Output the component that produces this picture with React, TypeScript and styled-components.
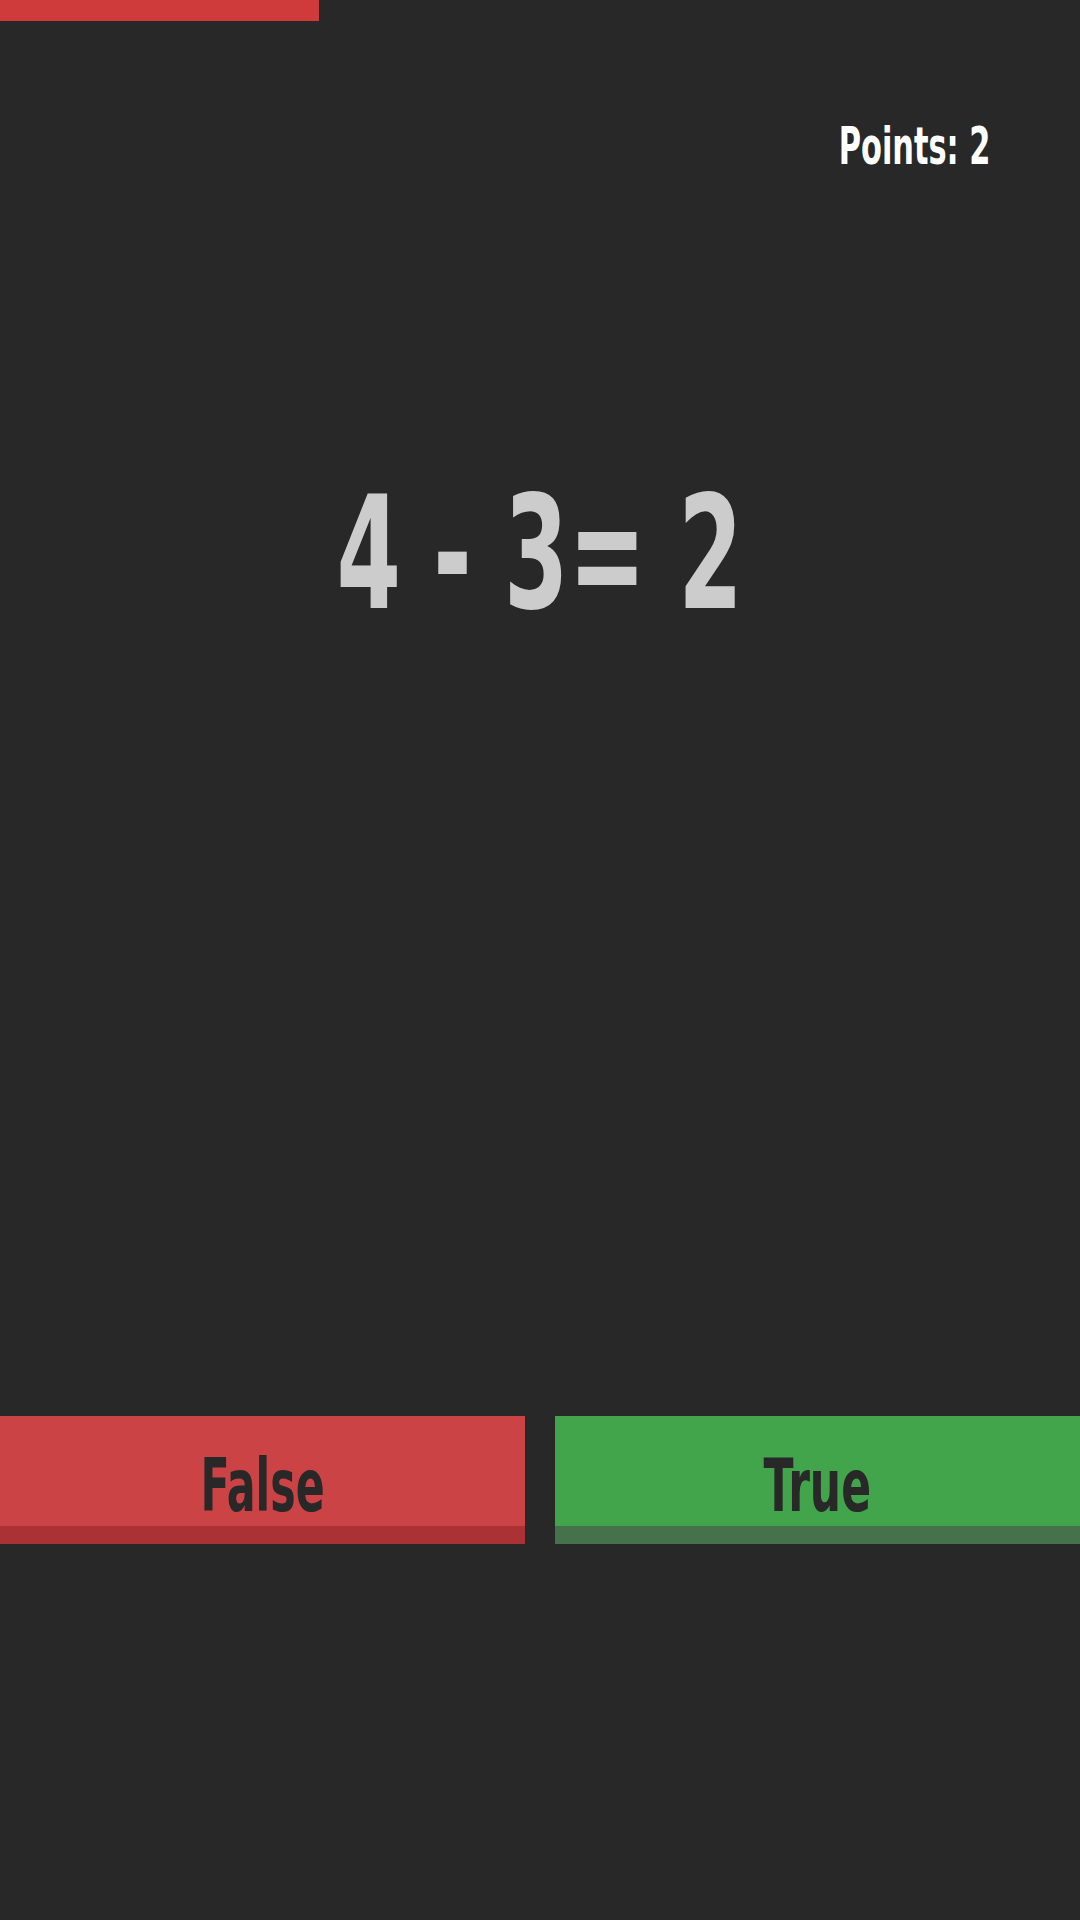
import React from 'react';
import styled, { createGlobalStyle } from 'styled-components';

const GlobalStyle = createGlobalStyle`
  html, body {
    margin: 0;
    padding: 0;
    background: #282828;
  }
  body {
    font-family: "DejaVu Sans Condensed", "DejaVu Sans", sans-serif;
  }
`;

const Screen = styled.div`
  width: 1080px;
  height: 1920px;
  background: #282828;
  display: flex;
  flex-direction: column;
  overflow: hidden;
`;

const TimerTrack = styled.div`
  height: 21px;
  width: 100%;
`;

const TimerFill = styled.div`
  height: 100%;
  background: #cf3a3b;
`;

const PointsRow = styled.div`
  display: flex;
  justify-content: flex-end;
  padding-right: 89px;
  margin-top: 99px;
`;

const Condensed = styled.span<{ $squeeze: number; $origin?: string }>`
  display: inline-block;
  transform: scaleX(${p => p.$squeeze});
  transform-origin: ${p => p.$origin ?? 'center'};
`;

const Points = styled.div`
  color: #ffffff;
  font-size: 52px;
  line-height: 52px;
  font-weight: 700;
  white-space: nowrap;
`;

const Equation = styled.div`
  margin-top: 304px;
  text-align: center;
  color: #cccccc;
  font-size: 156px;
  line-height: 156px;
  font-weight: 700;
  white-space: pre;
`;

const Answers = styled.div`
  margin-top: 784px;
  display: grid;
  grid-template-columns: 1fr 1fr;
  column-gap: 30px;
`;

const AnswerButton = styled.button<{ $face: string; $edge: string }>`
  all: unset;
  box-sizing: border-box;
  height: 128px;
  padding-top: 29px;
  background: ${p => p.$face};
  border-bottom: 18px solid ${p => p.$edge};
  color: #282828;
  font-family: inherit;
  font-size: 73px;
  line-height: 73px;
  font-weight: 700;
  text-align: center;
  cursor: pointer;
`;

export default function App() {
  const timeLeft = 0.295;
  return (
    <>
      <GlobalStyle />
      <Screen>
        <TimerTrack>
          <TimerFill style={{ width: `${timeLeft * 100}%` }} />
        </TimerTrack>
        <PointsRow>
          <Points>
            <Condensed $squeeze={0.65} $origin="right">Points: 2</Condensed>
          </Points>
        </PointsRow>
        <Equation>
          <Condensed $squeeze={0.66}>4 - 3= 2</Condensed>
        </Equation>
        <Answers>
          <AnswerButton $face="#cc4346" $edge="#ab3234">
            <Condensed $squeeze={0.65}>False</Condensed>
          </AnswerButton>
          <AnswerButton $face="#42a54c" $edge="#45714b">
            <Condensed $squeeze={0.67}>True</Condensed>
          </AnswerButton>
        </Answers>
      </Screen>
    </>
  );
}
